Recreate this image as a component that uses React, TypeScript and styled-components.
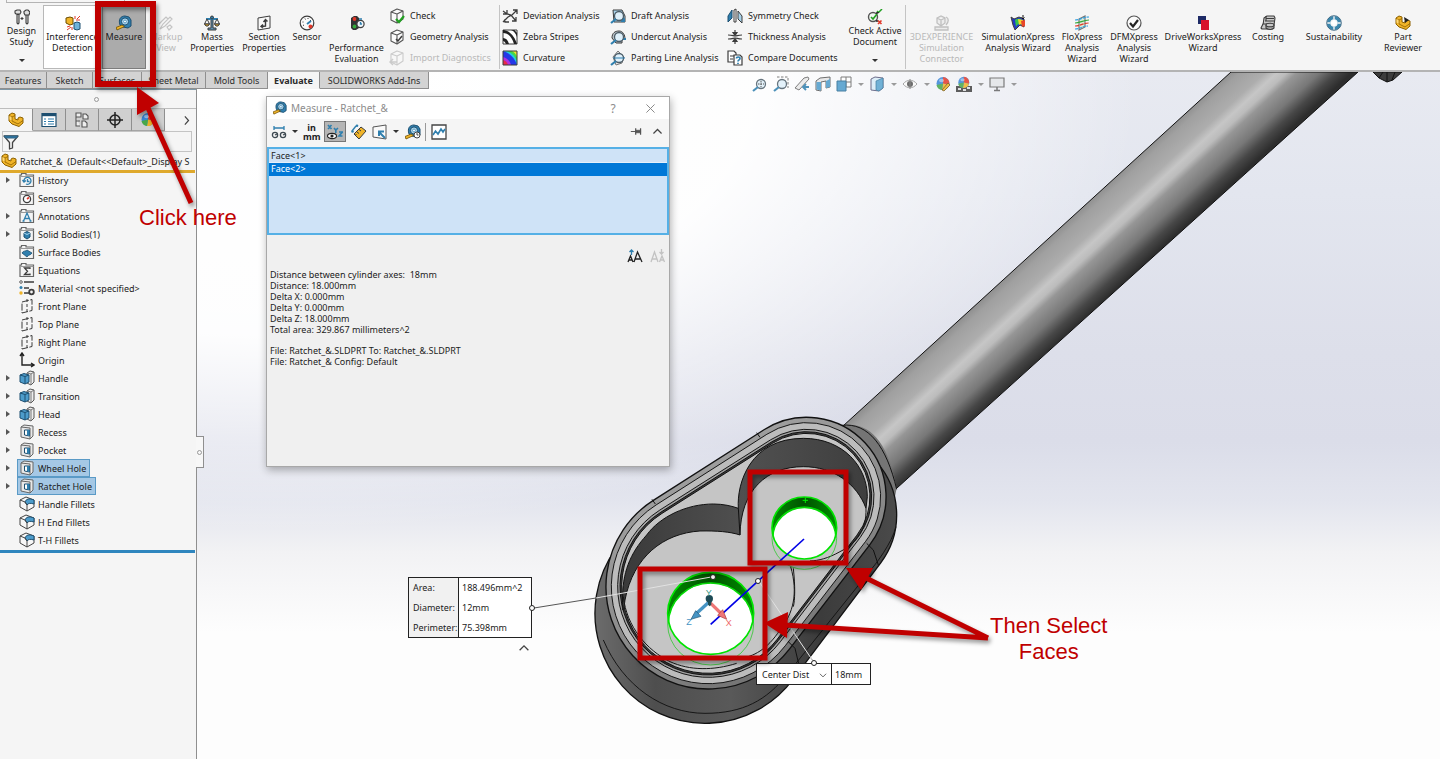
import React from "react";
import styled, { createGlobalStyle, css } from "styled-components";

const UI_FONT = '"Noto Sans", "Open Sans", sans-serif';
const RED = "#c00000";

const GlobalStyle = createGlobalStyle`
  *, *::before, *::after { box-sizing: border-box; }
  body { margin: 0; background: #fff; }
  button, input, select { font: inherit; color: inherit; margin: 0; padding: 0; border: 0; background: none; }
  ul { list-style: none; margin: 0; padding: 0; }
  svg { display: block; flex: none; }
`;

/* ---------- icons, all drawn on a 16 x 16 grid ---------- */

const K = "#3c3c3c";
const B = "#2f7fae";
const L = "#a9d3ea";
const Y = "#f0b429";

const folder = (
  <g>
    <path d="M1 14.500V3h1.500V1.500h4.500V3h7.500v11.500z" fill="#f4f4f4" stroke="#666" strokeWidth="1.200" />
    <path d="M1.500 4.500h13" stroke="#999" />
  </g>
);
const cube = (c: string) => (
  <g fill="#fafafa" stroke={c} strokeWidth="1.100" strokeLinejoin="round">
    <path d="M2 4l6-3 6 2v8l-6 4-6-3z" />
    <path d="M2 4l6 2 6-3M8 6v9" fill="none" />
  </g>
);
const tape = (
  <g>
    <path d="M4 10C2 4 5 1 9 1l4 1 2 3v6l-3 2-5-1z" fill={B} stroke="#1d4f70" />
    <circle cx="9" cy="6.500" r="3.600" fill={L} stroke="#1d4f70" />
    <circle cx="9" cy="6.500" r="1.400" fill="#fff" stroke={B} strokeWidth=".7" />
    <path d="M0 12.500l6-2.500 2.500 1.500L1 15z" fill={Y} stroke="#6b4c00" strokeWidth=".8" />
  </g>
);
const magnifier = (
  <g>
    <circle cx="9" cy="8" r="4.500" fill="#dff0fa" stroke="#4d5d68" strokeWidth="1.300" />
    <path d="M6 11l-5 4" stroke={B} strokeWidth="2.200" />
  </g>
);
const ball = (
  <g>
    <circle cx="8" cy="7.500" r="6.500" fill="#3a86d8" />
    <path d="M8 7.500V1a6.500 6.500 0 0 1 6.200 8z" fill="#e33b2e" />
    <path d="M8 7.500l6.200 1.500a6.500 6.500 0 0 1-7.200 5z" fill={Y} />
    <path d="M8 7.500l-1 6.500a6.500 6.500 0 0 1-5.500-5z" fill="#48a84a" />
    <ellipse cx="6.500" cy="4.500" rx="2.500" ry="1.800" fill="#fff" opacity=".45" />
  </g>
);
const part = (
  <g strokeLinejoin="round">
    <path d="M1 5V3l3-2 3 1v5l3 1V6l2-1 3 1v5l-4 3.500L4 12 1 9z" fill={Y} stroke="#8d6100" />
    <path d="M1 3.500l3 1.500 3-1.500M4 5v4l6 3 5-3.500" fill="none" stroke="#8d6100" strokeWidth=".8" />
    <path d="M1.500 4l2 1v3.500l-2-1z" fill="#ffd978" />
  </g>
);

const ICONS: Record<string, React.ReactNode> = {
  study: (
    <g fill="#ddd" stroke={K} strokeWidth="1.100">
      <path d="M1 2l2-1h3l1 2-1 2H2L1 4zM3 5.500h2V14l-1 1-1-1z" />
      <path d="M10 2.500L12 1h2l2 2-1 3h-4l-1-2zM12 6h2v8l-1 1-1-1z" />
      <path d="M6.500 9.500h3M8 8v3" />
    </g>
  ),
  interference: (
    <g>
      <path d="M1 3l4-1 3 1v6l-3 1-4-2z" fill={Y} stroke="#6b4c00" />
      <path d="M9 8l3-1 3 1v6l-3 1-3-1z" fill="#6fb3da" stroke="#1d4f70" />
      <path d="M10 1v3M15 1l-3 3M11 5h4M2 12l3-1M2 15l4-3M7 15v-3" stroke="#e0382a" />
    </g>
  ),
  tape,
  markup: (
    <g fill="#f6f6f6" stroke="#c4c4c4" strokeWidth="1.200">
      <path d="M1 9l4-4 3-3 2 2M2 14l5-3 7-7-2-2-7 7-3 5zM9 12l3-2 2 2-3 3z" />
    </g>
  ),
  scale: (
    <g fill={Y} stroke={K} strokeWidth="1">
      <path d="M7 2h2v11h3v2H4v-2h3z" fill="#5b8db0" />
      <path d="M2 4h12" stroke={B} strokeWidth="2" />
      <path d="M3 4L.5 9h5zM13 4l-2.500 5h5z" fill="#fff" />
      <path d="M.5 9h5L4 11H2zM10.500 9h5L14 11h-2z" />
      <circle cx="8" cy="2.500" r="1.500" fill={B} />
    </g>
  ),
  section: (
    <g fill="none" stroke={K}>
      <path d="M2 3l12-2v12L2 15z" fill="#f7f7f7" />
      <path d="M5 11.500l4.500-.5V5M7.500 7l2-2.500 2 2M7 9.500l-2 2 2 1.500" strokeWidth="1.400" />
    </g>
  ),
  gauge: (
    <g>
      <circle cx="8" cy="8" r="6.800" fill="#fafafa" stroke={K} strokeWidth="1.200" />
      <path d="M4 10l1 .5M3.500 7h1M6 3.500l.5 1M9 3v1M12 5l-1 1" stroke={K} />
      <path d="M8 9l4-3" stroke={B} strokeWidth="1.800" />
      <circle cx="11.500" cy="11.500" r="2" fill="#e0382a" />
    </g>
  ),
  performance: (
    <g>
      <path d="M2 3l3-2h3l2 2v10l-3 2H4l-2-2z" fill="#333" />
      <circle cx="5.500" cy="4" r="1.900" fill="#e0382a" />
      <circle cx="5.500" cy="11.500" r="1.900" fill="#35a83a" />
      <circle cx="11.500" cy="9" r="3.600" fill="#eef4f8" stroke={K} strokeWidth="1.200" />
      <path d="M11.500 7v2h1.500M10 4h3" stroke={B} fill="none" strokeWidth="1.300" />
    </g>
  ),
  check: (
    <g>
      {cube("#555")}
      <path d="M7 11l3 3 5-6" fill="none" stroke="#22a022" strokeWidth="2.200" />
    </g>
  ),
  geometry: (
    <g>
      {cube("#555")}
      <path d="M7 10l2 2 4-5" fill="none" stroke={K} strokeWidth="1.500" />
    </g>
  ),
  importing: (
    <g opacity=".45">
      {cube("#999")}
      <path d="M8 12H1m3-3l-3 3 3 3" fill="none" stroke="#999" strokeWidth="1.500" />
    </g>
  ),
  deviation: (
    <g fill="none" stroke={K} strokeWidth="1.300">
      <path d="M1 3l4 3 4 1 5 6M1 14l5-5 4-2 5-5M5 2v4H1M11 2h4v4M3 11v3h4M14 9v4h-4" />
    </g>
  ),
  zebra: (
    <g>
      <path d="M1 1h14v14H1z" fill="#fff" stroke={K} />
      <path d="M1 4c5 0 9 4 11 11h3C13 8 8 2 2 1H1zM1 9c3 0 5 2 6 6H4c-1-2-2-3-3-3zM9 1c3 1 5 4 6 7V4c-1-1-2-3-3-3z" fill="#222" />
    </g>
  ),
  curvature: (
    <g>
      <path d="M1 1h14v14H1z" fill="#2438e8" />
      <path d="M1 1h14v14C13 8 8 3 1 1z" fill="#20c8e8" />
      <path d="M5 1h10v10C13 6 10 3 5 1z" fill="#46d848" />
      <path d="M10 1h5v6c-1-3-3-5-5-6z" fill="#f2e230" />
      <path d="M1 7c4 1 7 4 8 8H1z" fill="#b030e0" />
      <path d="M1 10c3 1 4 2 5 5H1z" fill="#e82a4a" />
      <path d="M1 1h14v14H1z" fill="none" stroke={K} />
    </g>
  ),
  draft: (
    <g>
      <path d="M3 2h9l3 6v6H4z" fill={L} stroke={K} />
      <path d="M12 2v5l3 4v3h-4z" fill={B} />
      {magnifier}
    </g>
  ),
  undercut: (
    <g>
      <path d="M2 9c0-5 3-7 7-7s6 4 6 8h-3v4H6z" fill="#b9c3c9" stroke={K} />
      <path d="M12 9h4v2h-4z" fill={B} />
      {magnifier}
    </g>
  ),
  parting: (
    <g>
      <path d="M3 7l5-6 6 6-2 6-6 2z" fill="#e7e7e7" stroke="#777" />
      {magnifier}
      <path d="M3 8h12" stroke={B} />
    </g>
  ),
  symmetry: (
    <g strokeLinejoin="round">
      <path d="M1 14V8l4-6v8z" fill={B} stroke="#1d4f70" />
      <path d="M7 14V2l2-1v13z" fill="#fff" stroke={K} />
      <path d="M11 3l4 5v7l-4-4z" fill={L} stroke={K} />
    </g>
  ),
  thickness: (
    <g fill="none" stroke={K} strokeWidth="1.200">
      <path d="M1 6c5 0 5 1 7 1s3-1 7-1M1 10c5 0 5-1 7-1s3 1 7 1M8 1v5M8 15v-5" />
      <path d="M6 3.500h4L8 6.500zM6 12.500h4L8 9.500z" fill={K} />
    </g>
  ),
  compare: (
    <g fill="#fff" stroke={K} strokeWidth="1.200">
      <path d="M1 1h6l2 2v9H1z" />
      <path d="M3 6h4M3 9h3" />
      <path d="M7 5h6l2 2v8H7z" />
      <path d="M9.500 8.500c0-2 3.500-2 3.500 0 0 1.500-2 1.200-2 3M11 12.800v1.200" stroke={B} strokeWidth="1.700" fill="none" />
    </g>
  ),
  checkDoc: (
    <g fill="none">
      <circle cx="6" cy="8" r="4.500" stroke="#555" strokeWidth="1.400" fill="#f2f8f2" />
      <path d="M4 8l2 2 4-5" stroke="#22a022" strokeWidth="1.700" />
      <path d="M10 2l1.500 1.500L15 0" stroke="#22a022" strokeWidth="1.500" />
      <path d="M9 4h2M11 4v-1M9 12h2" stroke="#222" strokeWidth="1.500" />
      <path d="M11 11.500l3.500 3.500M14.500 11.500L11 15" stroke="#e0382a" strokeWidth="1.600" />
    </g>
  ),
  experience: (
    <g fill="#ececec" stroke="#c0c0c0" strokeWidth="1.300">
      <path d="M3 3l4-2 4 2v5l-4 3-4-3zM3 3l4 2 4-2M7 5v6M12 2c3 1 3 5 0 8" />
      <path d="M1 12h13v3H1z" />
    </g>
  ),
  simulation: (
    <g>
      <path d="M1 2l3 2 5-2 5 2v8l-4-2-5 5-2-5z" fill="#2438c8" stroke={K} />
      <path d="M5 5c3-2 5-1 7 0v5c-2-2-5-1-6 2z" fill="#33c24d" />
      <path d="M8 4l5 1v5c-2-1-3-1-4 0z" fill="#f2d330" />
      <path d="M11 6l4-1v6l-3 1z" fill="#e8472a" />
      <path d="M13 0v4M11.500 2.500L13 4l1.500-1.500" stroke="#111" fill="none" />
    </g>
  ),
  flow: (
    <g strokeWidth="1.200">
      <path d="M5 4l6-3v11l-6 3z" fill="#dcebd8" stroke="#777" />
      <path d="M1 5c5 0 8-3 14-3" stroke="#2f9fe0" fill="none" strokeDasharray="3 1" />
      <path d="M1 8c5 0 8-3 14-3" stroke="#35a83a" fill="none" />
      <path d="M1 11c5 0 8-3 14-3" stroke="#e0382a" fill="none" strokeDasharray="4 1" />
      <path d="M1 14c5 0 8-3 13-3" stroke="#2f9fe0" fill="none" strokeDasharray="3 1" />
    </g>
  ),
  dfm: (
    <g fill="none">
      <circle cx="8" cy="8" r="7" fill="#fafafa" stroke="#555" strokeWidth="1.200" />
      <path d="M4 8l3 3.500L12 5" stroke="#222" strokeWidth="2.200" />
    </g>
  ),
  driveworks: (
    <g>
      <path d="M3 1h8v8H3z" fill="#1d2a66" />
      <path d="M6 5h8v10H6z" fill="#d8102c" />
    </g>
  ),
  costing: (
    <g fill="#c9c9c9" stroke={K} strokeWidth="1.100" strokeLinejoin="round">
      <path d="M4 3l3-2h7l1 2-1 7H3z" />
      <path d="M6 3.500h8M5 6h9M6 1v5" />
      <path d="M1 13l2-4h4v5H2z" />
      <path d="M6 10v3c2 2 6 2 8 0v-3" fill="#a9a9a9" />
      <ellipse cx="10" cy="10" rx="4" ry="1.800" />
    </g>
  ),
  sustain: (
    <g>
      <circle cx="8" cy="8" r="5.400" fill="none" stroke="#3b87ad" strokeWidth="3.400" />
      <path d="M8 0v4M8 12v4M0 8h4M12 8h4" stroke="#f4f4f4" strokeWidth="1.400" />
      <circle cx="8" cy="8" r="7.300" fill="none" stroke="#1d4f70" strokeWidth=".8" />
      <path d="M8 4l1.500 2.500L12 8 9.500 9.500 8 12 6.500 9.500 4 8l2.500-1.500z" fill="#fff" />
    </g>
  ),
  review: (
    <g>
      {part}
      <path d="M9 2l5 3-4 3z" fill="#222" />
    </g>
  ),
  part,
  props: (
    <g fill="#fff" stroke="#1d4f70" strokeWidth="1.200">
      <path d="M1 1.500h14v13H1z" />
      <path d="M1 3h14" strokeWidth="2.400" />
      <path d="M3 7h2M3 9.500h2M3 12h2M7 7h6M7 9.500h6M7 12h6" stroke={B} />
    </g>
  ),
  config: (
    <g fill="#eee" stroke="#555" strokeWidth="1.100">
      <path d="M2 1h5v4H2zM2 5v9h4M2 9h4M9 2h3l2 2v3H9zM8 9h3l2 2v4H8z" />
    </g>
  ),
  target: (
    <g fill="none" stroke="#222" strokeWidth="1.500">
      <circle cx="8" cy="8" r="5" />
      <path d="M8 0v16M0 8h16" />
    </g>
  ),
  ball,
  funnel: (
    <g strokeLinejoin="round">
      <path d="M1 2h14L9.500 8.500v5.500l-3 1V8.500z" fill="#f4f4f4" stroke="#444" strokeWidth="1.300" />
      <path d="M1 2h14l-1.500 2h-11z" fill={B} stroke="#2b5f80" />
    </g>
  ),
  history: (
    <g fill="none">
      {folder}
      <path d="M5 9a3.500 3.500 0 1 1 2 3M3.500 8l1.500 2 2-1.500M8.500 7v2.500h2" stroke={B} strokeWidth="1.300" />
    </g>
  ),
  sensors: (
    <g fill="none">
      {folder}
      <circle cx="8" cy="9" r="3.600" fill="#fff" stroke={K} strokeWidth="1.300" />
      <path d="M8 9l2-1.500" stroke="#e0382a" strokeWidth="1.700" />
    </g>
  ),
  annotations: (
    <g fill="none">
      {folder}
      <path d="M4.500 13L8 5l3.500 8M6 10.500h4M3.500 13h2M10.500 13h2" stroke={B} strokeWidth="1.300" />
    </g>
  ),
  solids: (
    <g>
      {folder}
      <path d="M5 7l3-1.500L11 7v4l-3 2-3-2z" fill={B} stroke="#1d4f70" />
      <path d="M5 7l3 1.500L11 7" fill="none" stroke={L} />
    </g>
  ),
  surfaces: (
    <g>
      {folder}
      <path d="M3 9c2-3 3-1 5-3l5 3c-2 3-3 1-5 4z" fill={B} stroke="#1d4f70" strokeWidth=".8" />
    </g>
  ),
  equations: (
    <g fill="none">
      {folder}
      <path d="M11 7V6H5.500l3 3.300L5.500 12.500H11v-1" stroke={K} strokeWidth="1.300" />
    </g>
  ),
  material: (
    <g stroke={K} strokeWidth="1.300">
      <path d="M5 2h10M5 8h5M5 13h5" />
      <circle cx="2" cy="2" r="1.300" fill="#fff" strokeWidth=".8" />
      <circle cx="2" cy="7.500" r="1.500" fill={B} stroke="none" />
      <circle cx="2" cy="13" r="1.700" fill={Y} stroke="none" />
      <circle cx="12.500" cy="12" r="2.300" fill="none" strokeWidth="1.800" />
    </g>
  ),
  plane: (
    <g fill="none" stroke={K}>
      <path d="M3 4l10-2.500v11L3 15z" strokeDasharray="7 1.500" />
      <path d="M8 1v14" strokeDasharray="3 2" />
    </g>
  ),
  origin: (
    <g fill="none" stroke="#222" strokeWidth="1.400">
      <path d="M3 1v12h12M1 4l2-3 2 3M12 11l3 2-3 2" />
    </g>
  ),
  extrude: (
    <g strokeLinejoin="round">
      <path d="M8 3l3-2 4 1v10l-3 3-4-2z" fill="#eee" stroke="#555" />
      <path d="M12 4v11M12 4l3-2M8 3l4 1" fill="none" stroke="#777" />
      <path d="M1 5l4-1.500L10 5v7l-4 2-5-2z" fill="#4d9ccb" stroke="#1d4f70" />
      <path d="M1 5l5 1.500L10 5M6 6.500V14" stroke="#1d4f70" fill="none" />
    </g>
  ),
  cut: (
    <g strokeLinejoin="round">
      <path d="M2 3l3-2 9 1v10l-3 3-9-2z" fill="#e8e8e8" stroke="#666" />
      <path d="M11 15V4L2 3" fill="none" stroke="#666" />
      <path d="M5.500 6h5v6l-5-1z" fill="#fff" stroke="#1d4f70" />
      <path d="M8 6h2.500v6L8 11z" fill={B} />
    </g>
  ),
  fillet: (
    <g strokeLinejoin="round">
      <path d="M1 4l6-3 8 3v7l-7 4-7-4z" fill="#f7f7f7" stroke="#444" />
      <path d="M6 6c1-3 4-4 9-2v4c-3-1-6-1-7 1z" fill="#4d9ccb" stroke="#1d4f70" />
      <path d="M1 4l5 2 2 3v6" fill="none" stroke="#444" />
    </g>
  ),
  arcs: (
    <g fill="none" stroke="#3f4a52" strokeWidth="1.300">
      <circle cx="4" cy="11" r="2.600" />
      <circle cx="12" cy="11" r="2.600" />
      <path d="M4 11l2-1M12 11l2-1" />
      <path d="M3 4h10M3 2v4M13 2v4" stroke={B} />
    </g>
  ),
  xyz: (
    <g fill="none" stroke={B} strokeWidth="1.600">
      <path d="M1 1l3.500 4M4.500 1L1 5M7 4l1.800 2L11 4M8.800 6v3M12 8h3.500L12 12h3.500" />
      <ellipse cx="5" cy="12" rx="4.500" ry="2.600" fill="#fff" stroke="#222" strokeWidth="1.100" />
      <circle cx="5" cy="12" r="1.600" fill="#222" stroke="none" />
    </g>
  ),
  ruler: (
    <g>
      <path d="M1 7l4-5" stroke={B} strokeWidth="1.400" />
      <circle cx="1.500" cy="7.500" r="1.300" fill={B} />
      <circle cx="6" cy="1.800" r="1.300" fill={B} />
      <path d="M3 10l7-7 5 4-7 8z" fill={Y} stroke={K} />
      <path d="M6 8l2 1.500M8 5.500L10 7M4.500 10l1 1" stroke={K} />
    </g>
  ),
  project: (
    <g fill="none">
      <path d="M1 3l13-2v14L1 13z" fill="#fafafa" stroke="#555" />
      <path d="M13 14L7 8M7 12V7.500h5" stroke={B} strokeWidth="2" />
    </g>
  ),
  tapeClock: (
    <g>
      {tape}
      <circle cx="12" cy="11" r="3" fill="#fff" stroke="#444" />
      <path d="M12 9v2h1.500" fill="none" stroke="#444" />
    </g>
  ),
  chart: (
    <g fill="none">
      <path d="M1 1h14v14H1z" fill="#fff" stroke="#444" strokeWidth="1.300" />
      <path d="M2 11l2.500-4L7 10l3-5 2 3 2-3" stroke={B} strokeWidth="1.600" />
    </g>
  ),
  pin: (
    <g fill="#555" stroke="#555">
      <path d="M1 8h6" strokeWidth="1.200" />
      <path d="M7 4v8M13 4v8" strokeWidth="1.500" />
      <path d="M7 6.500h6v3H7z" />
    </g>
  ),
  up: <path d="M3 10.500L8 5.500l5 5" fill="none" stroke="#444" strokeWidth="1.500" />,
  right: <path d="M6 3l4.500 5L6 13" fill="none" stroke="#444" strokeWidth="1.500" />,
  down: <path d="M3 6l5 5 5-5" fill="none" stroke="#444" strokeWidth="1.300" />,
  close: <path d="M3 3l10 10M13 3L3 13" stroke="#888" strokeWidth="1.200" />,
  fontUp: (
    <g fill="none" stroke="#222" strokeWidth="1.300">
      <path d="M1 14l2.500-6L6 14M2 12h3M7 14l3.500-10L15 14M8.500 11h5" />
      <path d="M4.500 7V2M2.500 4l2-2 2 2" stroke={B} />
    </g>
  ),
  fontDown: (
    <g fill="none" stroke="#c2c2c2" strokeWidth="1.300">
      <path d="M1 14L4.500 4 8 14M2.500 11h4M9.500 14L12 8l2.500 6M10.500 12h3M11.500 1v5M9.500 4l2 2 2-2" />
    </g>
  ),
  zoomFit: (
    <g>
      {magnifier}
      <path d="M9 5v6M6 8h6" stroke={K} strokeDasharray="1.500 1" />
    </g>
  ),
  zoomArea: (
    <g>
      <path d="M4 1h11v11" fill="none" stroke="#666" strokeDasharray="2.500 1.500" />
      {magnifier}
    </g>
  ),
  previous: (
    <g>
      <path d="M1 12l9-10 4-1 1 2-10 11z" fill="#e9e9e9" stroke="#666" />
      <path d="M15 11H9m3-3l-3 3 3 3" fill="none" stroke={B} strokeWidth="1.900" />
    </g>
  ),
  sectionView: (
    <g strokeLinejoin="round">
      <path d="M1 5l4-3 10-1v10l-4 1V5L6 6v9l-5-1z" fill="#e6e6e6" stroke="#555" />
      <path d="M1.500 6L6 6v8.500l-4.500-1zM11 5l4-2v8l-4 1z" fill="#4d9ccb" />
    </g>
  ),
  orient: (
    <g>
      <path d="M5 1h10v10H5zM5 6h10M10 1v10" fill="#fff" stroke="#666" />
      <path d="M1 5h9v10H1z" fill="#4d9ccb" stroke="#2a6b92" />
    </g>
  ),
  display: (
    <g strokeLinejoin="round">
      <path d="M2 3l4-2 8 1v10l-4 3-8-1z" fill="#d9edf8" stroke="#557" />
      <path d="M7 5l7-3v10l-4 3-3-1z" fill="#5aa5d0" stroke="#2a6b92" strokeWidth=".7" />
    </g>
  ),
  eye: (
    <g>
      <path d="M1 8c4-5 10-5 14 0-4 5-10 5-14 0z" fill="#fafafa" stroke="#999" />
      <circle cx="8" cy="8" r="3" fill="#555" />
      <path d="M8 3v10" stroke="#777" />
    </g>
  ),
  appearance: (
    <g>
      {ball}
      <path d="M7 14l6-7 2 2-6 6z" fill={Y} stroke="#6b4c00" strokeWidth=".8" />
    </g>
  ),
  scene: (
    <g>
      <path d="M0 10h16v6H0z" fill="#444" />
      <path d="M2 12h3v2H2zM7 13h3v2H7zM11 11h3v2h-3z" fill="#ddd" />
      <g transform="translate(1 0) scale(.85)">{ball}</g>
    </g>
  ),
  monitor: (
    <g stroke="#666">
      <path d="M1 2h14v9H1z" fill="#e4e6e8" strokeWidth="1.200" />
      <path d="M8 11v3M5 14.500h6" strokeWidth="1.500" />
    </g>
  ),
};

const Icon = ({ name, size = 16 }: { name: string; size?: number }) => (
  <svg width={size} height={size} viewBox="0 0 16 16" aria-hidden="true">
    {ICONS[name]}
  </svg>
);

/* ---------- page frame ---------- */

const Page = styled.div`
  position: relative;
  display: flex;
  flex-direction: column;
  min-height: 100vh;
  overflow: hidden;
  font: 9px/11px ${UI_FONT};
  color: #1c1c1c;
`;

const Ribbon = styled.header`
  position: relative;
  display: flex;
  height: 72px;
  padding-top: 5px;
  background: #f5f5f5;
  border-bottom: 2px solid #b4b4b4;

  &::before {
    content: "";
    position: absolute;
    top: 0;
    left: 6px;
    width: 119px;
    height: 3px;
    border: 1px solid #b4b4b4;
    border-top: 0;
  }
`;

const Tool = styled.button<{ $w: number; $state?: "hover" | "pressed" | "off"; $top?: boolean; $third?: boolean }>`
  position: relative;
  display: flex;
  flex: none;
  flex-direction: column;
  align-items: center;
  width: ${(p) => p.$w}px;
  height: 64px;
  padding-top: ${(p) => (p.$top ? 3 : 9)}px;
  border: 1px solid transparent;
  white-space: pre;
  text-align: center;

  & > span { margin-top: ${(p) => (p.$third ? 11 : 0)}px; }

  ${(p) => p.$state === "hover" && css`background: #fff; border-color: #b8b8b8;`}
  ${(p) => p.$state === "pressed" && css`background: #ababab; border-color: #7c7c7c;`}
  ${(p) => p.$state === "off" && css`color: #b9b9b9;`}
`;

const Caret = styled.i<{ $gray?: boolean }>`
  border: 3px solid transparent;
  border-top-color: ${(p) => (p.$gray ? "#8b8b8b" : "#333")};
  border-bottom-width: 0;
`;

const ToolCaret = styled(Caret)`
  margin-top: auto;
  margin-bottom: 6px;
`;

const Rule = styled.div`
  flex: none;
  width: 1px;
  height: 64px;
  margin-right: 2px;
  background: #c4c4c4;
`;

const ToolColumn = styled.div<{ $w: number }>`
  display: flex;
  flex: none;
  flex-direction: column;
  width: ${(p) => p.$w}px;
`;

const SmallTool = styled.button<{ $off?: boolean }>`
  display: flex;
  align-items: center;
  gap: 5px;
  height: 21px;
  white-space: nowrap;
  color: ${(p) => (p.$off ? "#b9b9b9" : "inherit")};
`;

const Workspace = styled.div`
  position: relative;
  display: flex;
  flex: 1;
  flex-direction: column;
  background:
    radial-gradient(ellipse 860px 440px at 280px 20px, #fff 0%, rgba(255, 255, 255, 0.95) 55%, rgba(255, 255, 255, 0) 100%),
    linear-gradient(180deg, #e8eaf1 0, #e3e6ef 120px, #dddfea 280px, #dbdde9 370px, #e3e5ee 430px, #f2f2f4 480px, #fdfdfd 560px);
`;

const SceneSvg = styled.svg`
  position: absolute;
  inset: 0;
  width: 1440px;
  height: 688px;
`;

const TabStrip = styled.nav`
  position: relative;
  display: flex;
  height: 17px;
`;

const Tab = styled.button<{ $w: number; $active?: boolean }>`
  flex: none;
  width: ${(p) => p.$w}px;
  background: ${(p) => (p.$active ? "#f5f5f5" : "#d3d3d3")};
  border: 1px solid #8f8f8f;
  border-width: 0 1px 1px 0;
  border-bottom-color: ${(p) => (p.$active ? "#f5f5f5" : "#8f8f8f")};
  font-weight: ${(p) => (p.$active ? 700 : 400)};
  color: #2b2b2b;
  white-space: nowrap;
`;

const Body = styled.div`
  position: relative;
  display: flex;
  flex: 1;
`;

/* ---------- feature manager ---------- */

const Sidebar = styled.aside`
  position: relative;
  flex: none;
  width: 197px;
  background: #f5f5f5;
  border-right: 1px solid #8f8f8f;
`;

const Grip = styled.div`
  display: flex;
  align-items: center;
  justify-content: center;
  height: 20px;
  padding-right: 4px;
  border-top: 1px solid #7f98a6;
  border-bottom: 1px solid #bdbdbd;
`;

const Dot = styled.i`
  width: 5px;
  height: 5px;
  border: 1px solid #999;
  border-radius: 50%;
`;

const PanelTabs = styled.div`
  display: flex;
  height: 22px;
`;

const PanelTab = styled.button<{ $active?: boolean }>`
  display: flex;
  align-items: center;
  justify-content: center;
  width: 33px;
  background: ${(p) => (p.$active ? "#f5f5f5" : "#d0d0d0")};
  border-right: 1px solid #8f8f8f;
  border-bottom: 1px solid ${(p) => (p.$active ? "#f5f5f5" : "#a5a5a5")};
`;

const PanelMore = styled.button`
  margin-left: auto;
  padding-right: 3px;
`;

const Filter = styled.label`
  display: flex;
  align-items: center;
  height: 21px;
  margin: 0 4px 0 2px;
  border: 1px solid #c4c4c4;

  & > input { flex: 1; min-width: 0; height: 100%; outline: 0; }
`;

const RootRow = styled.div`
  display: flex;
  align-items: center;
  gap: 3px;
  height: 21px;
  margin-right: 1px;
  padding-left: 1px;
  white-space: pre;
  border-bottom: 3px solid #dfa92c;
`;

const Tree = styled.ul`
  margin-top: -2px;
  padding-bottom: 1px;
`;

const TreeRow = styled.li`
  display: flex;
  align-items: center;
  height: 18px;
  padding-left: 6px;
`;

const Twist = styled.i<{ $open: boolean }>`
  width: 11px;
  height: 6px;
  border: 3px solid transparent;
  border-left: 4px solid ${(p) => (p.$open ? "#555" : "transparent")};
`;

const TreeLabel = styled.button<{ $on?: boolean }>`
  display: flex;
  align-items: center;
  gap: 3px;
  height: 18px;
  padding: 0 3px 0 1px;
  border: 1px solid ${(p) => (p.$on ? "#5a9ac6" : "transparent")};
  background: ${(p) => (p.$on ? "#a5c8e5" : "none")};
  white-space: nowrap;
`;

const RollbackBar = styled.div`
  height: 3px;
  margin-right: 1px;
  background: #2f86be;
`;

const EdgeHandle = styled.button`
  position: absolute;
  top: 347px;
  left: 196px;
  display: flex;
  align-items: center;
  justify-content: center;
  width: 8px;
  height: 32px;
  background: #f7f7f7;
  border: 1px solid #8f8f8f;
  border-left: 0;
`;

/* ---------- view toolbar ---------- */

const ViewBar = styled.div`
  position: absolute;
  top: 4px;
  left: 752px;
  display: flex;
  align-items: center;
  gap: 4px;
  height: 16px;
  opacity: 0.85;
`;

const ViewButton = styled.button`
  width: 17px;
  height: 16px;
`;

const CaretButton = styled.button`
  display: flex;
  justify-content: center;
  width: 8px;
`;

/* ---------- measure window ---------- */

const Dialog = styled.section`
  position: absolute;
  top: 24px;
  left: 266px;
  display: flex;
  flex-direction: column;
  width: 404px;
  height: 371px;
  background: #f0f0f0;
  border: 1px solid #a8a8a8;
  box-shadow: 1px 3px 8px rgba(0, 0, 0, 0.3);
`;

const TitleBar = styled.header`
  display: flex;
  align-items: center;
  height: 22px;
  padding: 0 11px 0 6px;
  background: #fff;
  color: #8c8c8c;

  & > h1 { flex: 1; margin: 0 0 0 4px; font: 10px/14px ${UI_FONT}; }
`;

const TitleButton = styled.button`
  display: flex;
  align-items: center;
  justify-content: center;
  width: 16px;
  margin-left: 21px;
  font-size: 12px;
`;

const DialogTools = styled.div`
  display: flex;
  align-items: center;
  gap: 4px;
  height: 28px;
  padding: 0 3px 3px;
  background: #f5f5f5;
`;

const DialogTool = styled.button<{ $on?: boolean }>`
  display: flex;
  align-items: center;
  justify-content: center;
  width: ${(p) => (p.$on ? 22 : 17)}px;
  height: 21px;
  border: ${(p) => (p.$on ? "1px solid #777" : "0")};
  background: ${(p) => (p.$on ? "#b5b5b5" : "none")};
`;

const Units = styled.button`
  width: 17px;
  font: 700 9px/9px ${UI_FONT};
  white-space: pre;
`;

const ToolRule = styled.i`
  width: 1px;
  height: 18px;
  background: #999;
`;

const Spacer = styled.i`
  flex: 1;
`;

const Selection = styled.ul`
  height: 88px;
  padding-top: 1px;
  background: #cfe3f7;
  border: 2px solid #55b0e6;
`;

const SelectionRow = styled.li<{ $on?: boolean }>`
  height: 13px;
  padding-left: 2px;
  line-height: 12px;
  color: ${(p) => (p.$on ? "#fff" : "inherit")};
  background: ${(p) => (p.$on ? "#0078d7" : "none")};
  border-bottom: 1px solid ${(p) => (p.$on ? "#0078d7" : "#e6f0fa")};
`;

const FontButtons = styled.div`
  display: flex;
  justify-content: flex-end;
  gap: 7px;
  padding: 13px 3px 5px;
`;

const Report = styled.p`
  margin: 0 3px 10px;
  white-space: pre;
`;

/* ---------- callouts on the model ---------- */

const AreaCallout = styled.table`
  position: absolute;
  top: 505px;
  left: 408px;
  width: 124px;
  border: 1px solid #222;
  border-collapse: collapse;
  background: #fff;

  th, td { height: 20px; padding: 0 0 0 4px; font-weight: 400; text-align: left; white-space: nowrap; }
  th { width: 50px; background: #f1f1f1; border-right: 1px solid #222; }
  td { padding-left: 3px; }
`;

const CalloutToggle = styled.button`
  position: absolute;
  top: 569px;
  left: 517px;
`;

const DistanceCallout = styled.div`
  position: absolute;
  top: 591px;
  left: 756px;
  display: flex;
  height: 22px;
  background: #fff;
  border: 1px solid #222;

  & > input { width: 38px; padding-left: 3px; }
`;

const SelectBox = styled.label`
  position: relative;
  display: flex;
  border-right: 1px solid #222;

  & > select { width: 74px; padding-left: 5px; appearance: none; }
  & > svg { position: absolute; top: 6px; right: 3px; }
`;

/* ---------- red mark-up layer ---------- */

const Marks = styled.svg`
  position: absolute;
  top: 0;
  left: 0;
  width: 1440px;
  height: 759px;
  pointer-events: none;
  filter: drop-shadow(2px 3px 2px rgba(0, 0, 0, 0.4));
`;

const Note = styled.p<{ $x: number; $y: number }>`
  position: absolute;
  top: ${(p) => p.$y}px;
  left: ${(p) => p.$x}px;
  margin: 0;
  font: 22px/26px "Liberation Sans", Arial, sans-serif;
  color: ${RED};
  text-align: center;
  white-space: pre;
`;

/* ---------- data ---------- */

type ToolDef = { icon: string; label: string; w: number; state?: "hover" | "pressed" | "off"; third?: boolean };

const LEFT_TOOLS: ToolDef[] = [
  { icon: "interference", label: "Interference\nDetection", w: 59, state: "hover" },
  { icon: "tape", label: "Measure", w: 44, state: "pressed" },
  { icon: "markup", label: "Markup\nView", w: 40, state: "off" },
  { icon: "scale", label: "Mass\nProperties", w: 52 },
  { icon: "section", label: "Section\nProperties", w: 52 },
  { icon: "gauge", label: "Sensor", w: 34 },
  { icon: "performance", label: "Performance\nEvaluation", w: 65, third: true },
];

const COLUMNS: { w: number; items: [string, string][] }[] = [
  { w: 108, items: [["deviation", "Deviation Analysis"], ["zebra", "Zebra Stripes"], ["curvature", "Curvature"]] },
  { w: 117, items: [["draft", "Draft Analysis"], ["undercut", "Undercut Analysis"], ["parting", "Parting Line Analysis"]] },
  { w: 118, items: [["symmetry", "Symmetry Check"], ["thickness", "Thickness Analysis"], ["compare", "Compare Documents"]] },
];

const RIGHT_TOOLS: ToolDef[] = [
  { icon: "experience", label: "3DEXPERIENCE\nSimulation\nConnector", w: 67, state: "off" },
  { icon: "simulation", label: "SimulationXpress\nAnalysis Wizard", w: 86 },
  { icon: "flow", label: "FloXpress\nAnalysis\nWizard", w: 42 },
  { icon: "dfm", label: "DFMXpress\nAnalysis\nWizard", w: 62 },
  { icon: "driveworks", label: "DriveWorksXpress\nWizard", w: 76 },
  { icon: "costing", label: "Costing", w: 54 },
  { icon: "sustain", label: "Sustainability", w: 78 },
  { icon: "review", label: "Part\nReviewer", w: 60 },
];

const TABS: [string, number][] = [
  ["Features", 47],
  ["Sketch", 46],
  ["Surfaces", 49],
  ["Sheet Metal", 64],
  ["Mold Tools", 62],
  ["Evaluate", 52],
  ["SOLIDWORKS Add-Ins", 109],
];

const TREE: { icon: string; label: string; open?: boolean; on?: boolean }[] = [
  { icon: "history", label: "History", open: true },
  { icon: "sensors", label: "Sensors" },
  { icon: "annotations", label: "Annotations", open: true },
  { icon: "solids", label: "Solid Bodies(1)", open: true },
  { icon: "surfaces", label: "Surface Bodies" },
  { icon: "equations", label: "Equations" },
  { icon: "material", label: "Material <not specified>" },
  { icon: "plane", label: "Front Plane" },
  { icon: "plane", label: "Top Plane" },
  { icon: "plane", label: "Right Plane" },
  { icon: "origin", label: "Origin" },
  { icon: "extrude", label: "Handle", open: true },
  { icon: "extrude", label: "Transition", open: true },
  { icon: "extrude", label: "Head", open: true },
  { icon: "cut", label: "Recess", open: true },
  { icon: "cut", label: "Pocket", open: true },
  { icon: "cut", label: "Wheel Hole", open: true, on: true },
  { icon: "cut", label: "Ratchet Hole", open: true, on: true },
  { icon: "fillet", label: "Handle Fillets" },
  { icon: "fillet", label: "H End Fillets" },
  { icon: "fillet", label: "T-H Fillets" },
];

const VIEW_TOOLS = [
  "zoomFit", "zoomArea", "previous", "sectionView", "orient", "|", "display", "|", "eye", "|", "appearance", "scene", "|", "monitor", "|",
];

/* ---------- model drawing ---------- */

/** Outline of two circles joined by their outer tangents. */
function capsule(x1: number, y1: number, r1: number, x2: number, y2: number, r2: number) {
  const d = Math.hypot(x2 - x1, y2 - y1);
  const ux = (x2 - x1) / d;
  const uy = (y2 - y1) / d;
  const k = (r1 - r2) / d;
  const s = Math.sqrt(1 - k * k);
  const a = [ux * k + uy * s, uy * k - ux * s];
  const b = [ux * k - uy * s, uy * k + ux * s];
  const pt = (x: number, y: number, r: number, n: number[]) => `${(x + r * n[0]).toFixed(1)} ${(y + r * n[1]).toFixed(1)}`;
  return `M${pt(x1, y1, r1, a)}L${pt(x2, y2, r2, a)}A${r2} ${r2} 0 0 1 ${pt(x2, y2, r2, b)}L${pt(x1, y1, r1, b)}A${r1} ${r1} 0 1 1 ${pt(x1, y1, r1, a)}Z`;
}

const rim = (big: number, small: number) => capsule(385, 560, big, 680, 290, small);

const Hole = ({ id, cx, top, bottom, rx, ry }: { id: string; cx: number; top: number; bottom: number; rx: number; ry: number }) => (
  <g>
    <clipPath id={id}>
      <ellipse cx={cx} cy={top} rx={rx} ry={ry} />
    </clipPath>
    <ellipse cx={cx} cy={top} rx={rx} ry={ry} fill="url(#green)" />
    <g clipPath={`url(#${id})`}>
      <ellipse cx={cx} cy={bottom} rx={rx - 2} ry={ry} fill="#fff" stroke="#00e400" strokeWidth="5" />
    </g>
    <ellipse cx={cx} cy={bottom} rx={rx} ry={ry} fill="none" stroke="#10c810" strokeWidth="2" />
    <ellipse cx={cx} cy={top} rx={rx} ry={ry} fill="none" stroke="#00e400" strokeWidth="5" />
  </g>
);

const Model = () => (
  <SceneSvg viewBox="0 72 1440 688" role="img" aria-label="Ratchet handle model">
    <defs>
      <linearGradient id="tube" gradientUnits="userSpaceOnUse" x1="843" y1="426" x2="900" y2="488">
        <stop offset="0" stopColor="#8e8e8e" />
        <stop offset=".1" stopColor="#a0a0a0" />
        <stop offset=".3" stopColor="#adadad" />
        <stop offset=".4" stopColor="#c6c6c6" />
        <stop offset=".48" stopColor="#bcbcbc" />
        <stop offset=".56" stopColor="#969696" />
        <stop offset=".74" stopColor="#787878" />
        <stop offset=".88" stopColor="#474747" />
        <stop offset="1" stopColor="#2d2d2d" />
      </linearGradient>
      <linearGradient id="side" x1="0" y1="0" x2="1" y2="0">
        <stop offset="0" stopColor="#6c6c6c" />
        <stop offset=".2" stopColor="#4e4e4e" />
        <stop offset=".45" stopColor="#595959" />
        <stop offset=".75" stopColor="#3c3c3c" />
        <stop offset="1" stopColor="#4a4a4a" />
      </linearGradient>
      <linearGradient id="fillet" x1=".2" y1="0" x2=".8" y2="1">
        <stop offset="0" stopColor="#a8a8a8" />
        <stop offset=".5" stopColor="#8e8e8e" />
        <stop offset="1" stopColor="#6a6a6a" />
      </linearGradient>
      <linearGradient id="green" x1="0" y1="0" x2="1" y2="0">
        <stop offset="0" stopColor="#008a00" />
        <stop offset=".5" stopColor="#005200" />
        <stop offset="1" stopColor="#009000" />
      </linearGradient>
      <linearGradient id="wall" x1="0" y1="0" x2="1" y2="0">
        <stop offset="0" stopColor="#3a3a3a" />
        <stop offset=".5" stopColor="#505050" />
        <stop offset="1" stopColor="#3e3e3e" />
      </linearGradient>
    </defs>

    <path d="M843 426L1231 72H1358L897 488L870 470Z" fill="url(#tube)" stroke="#111" />
    <path d="M1373 72l6 6 8 4 6-2 9-8zM1379 78l4-6M1387 82v-10M1392 80l3-8" fill="#3c3c3c" stroke="#111" />

    <g transform="translate(580 400) scale(.33333)" strokeLinejoin="round">
      <path d="M785 78C870 60 925 130 950 265L945 290L938 330L800 150Z" fill="#757575" />
      <path d="M785 76C865 66 920 140 950 268" fill="none" stroke="#111" strokeWidth="3" />
      <path d={capsule(375, 640, 330, 710, 345, 240)} fill="url(#side)" stroke="#111" strokeWidth="4" />
      <path d="M70 720C130 860 250 940 375 940C490 940 560 900 620 825L860 525C890 490 935 430 948 380" fill="none" stroke="#161616" strokeWidth="3" />
      <path d={rim(307, 238)} fill="url(#fillet)" stroke="#111" strokeWidth="4" />
      <path d={rim(291, 222)} fill="#bcbcbc" stroke="#161616" strokeWidth="3" />
      <path d={rim(272, 202)} fill="#a2a2a2" stroke="#161616" strokeWidth="3" />
      <path d={rim(265, 195)} fill="#3d3d3d" stroke="#111" strokeWidth="3" />
      <path d={rim(260, 190)} fill="#c5c5c5" stroke="#111" strokeWidth="3" />
      <path d="M128 600C126 520 150 460 200 405C240 350 320 312 400 312C430 312 455 318 475 325C470 250 510 115 670 115C790 115 862 200 862 290L858 325C830 250 760 200 670 200C560 200 482 270 480 405C450 395 410 392 360 393C250 400 160 470 135 600C130 640 125 640 128 600Z" fill="url(#wall)" stroke="#111" strokeWidth="3" />
      <path d="M475 325L480 405" stroke="#111" strokeWidth="3" />
      <path d="M858 325C860 390 830 430 780 455C745 475 715 482 690 483M632 500C655 580 640 640 600 690C560 750 520 770 480 775M640 505C646 560 645 600 640 620" fill="none" stroke="#161616" strokeWidth="3" />
      <path d="M130 590C140 680 200 750 270 785C330 812 400 812 470 790" fill="none" stroke="#161616" strokeWidth="3" />
      <path d="M216 298l10 14M530 98l10 14M860 430l20 20 15 45M625 725l20 20 12 50" fill="none" stroke="#111" strokeWidth="3" />

      <Hole id="wheel" cx={392} top={640} bottom={672} rx={129} ry={123} />
      <Hole id="ratchet" cx={673} top={384} bottom={415} rx={97} ry={93} />
      <path d="M668 301h16M676 293v16" stroke="#00f000" strokeWidth="3" />
      <path d="M392 673L672 417" stroke="#0000e6" strokeWidth="5" />

      <path d="M388 605L350 640" stroke="#4694c4" strokeWidth="10" />
      <path d="M333 658l14-26 16 17z" fill="#4694c4" stroke="#1d4f70" strokeWidth="2" />
      <path d="M390 608L425 642" stroke="#e77" strokeWidth="10" />
      <path d="M440 658l-27-12 15-17z" fill="#e77" stroke="#a33" strokeWidth="2" />
      <path d="M384 600h10v14l-5 5-5-5z" fill="#1f4f55" />
      <circle cx="388" cy="596" r="11" fill="#1d4a55" />
      <g fontFamily="Liberation Sans, Arial, sans-serif" fontSize="27" textAnchor="middle">
        <text x="386" y="588" fill="#3a9a8a">Y</text>
        <text x="327" y="676" fill="#4694c4">Z</text>
        <text x="446" y="678" fill="#e66">X</text>
      </g>
    </g>
  </SceneSvg>
);

const Leaders = () => (
  <SceneSvg viewBox="0 72 1440 688" aria-hidden="true">
    <path d="M534 608L596 598M794 633L813 661" stroke="#555" />
    <path d="M596 598L711 577M760 583L813 661" stroke="#e2e2e2" />
    <g fill="#fff" stroke="#222">
      <circle cx="532" cy="608" r="2.500" />
      <circle cx="713" cy="577" r="2.500" />
      <circle cx="758" cy="581" r="2.500" />
      <circle cx="814" cy="663" r="2.500" />
    </g>
  </SceneSvg>
);

const ToolButton = ({ t }: { t: ToolDef }) => (
  <Tool $w={t.w} $state={t.state} $third={t.third}>
    <Icon name={t.icon} />
    <span>{t.label}</span>
  </Tool>
);

export default function App() {
  return (
    <Page>
      <GlobalStyle />

      <Ribbon>
        <Tool $w={43} $top>
          <Icon name="study" />
          <span>{"Design\nStudy"}</span>
          <ToolCaret />
        </Tool>
        {LEFT_TOOLS.map((t) => (
          <ToolButton key={t.label} t={t} />
        ))}
        <ToolColumn $w={110}>
          <SmallTool><Icon name="check" />Check</SmallTool>
          <SmallTool><Icon name="geometry" />Geometry Analysis</SmallTool>
          <SmallTool $off><Icon name="importing" />Import Diagnostics</SmallTool>
        </ToolColumn>
        <Rule />
        {COLUMNS.map((c, i) => (
          <ToolColumn key={i} $w={c.w}>
            {c.items.map(([icon, label]) => (
              <SmallTool key={label}><Icon name={icon} />{label}</SmallTool>
            ))}
          </ToolColumn>
        ))}
        <Tool $w={60} $top>
          <Icon name="checkDoc" />
          <span>{"Check Active\nDocument"}</span>
          <ToolCaret />
        </Tool>
        <Rule />
        {RIGHT_TOOLS.map((t) => (
          <ToolButton key={t.label} t={t} />
        ))}
      </Ribbon>

      <Workspace>
        <Model />
        <TabStrip>
          {TABS.map(([label, w]) => (
            <Tab key={label} $w={w} $active={label === "Evaluate"}>{label}</Tab>
          ))}
        </TabStrip>

        <Body>
          <Sidebar>
            <Grip><Dot /></Grip>
            <PanelTabs>
              {["part", "props", "config", "target", "ball"].map((n, i) => (
                <PanelTab key={n} $active={i === 0} aria-label={n}><Icon name={n} /></PanelTab>
              ))}
              <PanelMore aria-label="More tabs"><Icon name="right" size={13} /></PanelMore>
            </PanelTabs>
            <Filter>
              <Icon name="funnel" />
              <input aria-label="Filter tree" />
            </Filter>
            <RootRow>
              <Icon name="part" />
              {"Ratchet_&  (Default<<Default>_Display S"}
            </RootRow>
            <Tree>
              {TREE.map((n) => (
                <TreeRow key={n.label}>
                  <Twist $open={!!n.open} />
                  <TreeLabel $on={n.on}>
                    <Icon name={n.icon} />
                    {n.label}
                  </TreeLabel>
                </TreeRow>
              ))}
            </Tree>
            <RollbackBar />
            <EdgeHandle aria-label="Collapse panel"><Dot /></EdgeHandle>
          </Sidebar>
        </Body>

        <ViewBar>
          {VIEW_TOOLS.map((n, i) =>
            n === "|" ? (
              <CaretButton key={i} aria-label="Options"><Caret $gray /></CaretButton>
            ) : (
              <ViewButton key={i} aria-label={n}><Icon name={n} /></ViewButton>
            ),
          )}
        </ViewBar>

        <Dialog aria-label="Measure">
          <TitleBar>
            <Icon name="tape" size={14} />
            <h1>Measure - Ratchet_&amp;</h1>
            <TitleButton aria-label="Help">?</TitleButton>
            <TitleButton aria-label="Close"><Icon name="close" size={13} /></TitleButton>
          </TitleBar>
          <DialogTools>
            <DialogTool aria-label="Arc measurements"><Icon name="arcs" /></DialogTool>
            <CaretButton aria-label="Arc options"><Caret /></CaretButton>
            <Units>{"in\nmm"}</Units>
            <DialogTool $on aria-label="Show XYZ"><Icon name="xyz" /></DialogTool>
            <DialogTool aria-label="Point to point"><Icon name="ruler" /></DialogTool>
            <DialogTool aria-label="Projected on"><Icon name="project" /></DialogTool>
            <CaretButton aria-label="Projection options"><Caret /></CaretButton>
            <DialogTool aria-label="Measurement history"><Icon name="tapeClock" /></DialogTool>
            <ToolRule />
            <DialogTool aria-label="Create sensor"><Icon name="chart" /></DialogTool>
            <Spacer />
            <DialogTool aria-label="Pin"><Icon name="pin" size={13} /></DialogTool>
            <DialogTool aria-label="Collapse"><Icon name="up" size={13} /></DialogTool>
          </DialogTools>
          <Selection>
            <SelectionRow>Face&lt;1&gt;</SelectionRow>
            <SelectionRow $on>Face&lt;2&gt;</SelectionRow>
          </Selection>
          <FontButtons>
            <button aria-label="Larger text"><Icon name="fontUp" /></button>
            <button aria-label="Smaller text"><Icon name="fontDown" /></button>
          </FontButtons>
          <Report>
            {"Distance between cylinder axes:  18mm\nDistance: 18.000mm\nDelta X: 0.000mm\nDelta Y: 0.000mm\nDelta Z: 18.000mm\nTotal area: 329.867 millimeters^2"}
          </Report>
          <Report>{"File: Ratchet_&.SLDPRT To: Ratchet_&.SLDPRT\nFile: Ratchet_& Config: Default"}</Report>
        </Dialog>

        <AreaCallout>
          <tbody>
            <tr><th scope="row">Area:</th><td>188.496mm^2</td></tr>
            <tr><th scope="row">Diameter:</th><td>12mm</td></tr>
            <tr><th scope="row">Perimeter:</th><td>75.398mm</td></tr>
          </tbody>
        </AreaCallout>
        <CalloutToggle aria-label="Collapse callout"><Icon name="up" size={14} /></CalloutToggle>
        <DistanceCallout>
          <SelectBox>
            <select aria-label="Distance type" defaultValue="Center Dist">
              <option>Center Dist</option>
            </select>
            <Icon name="down" size={10} />
          </SelectBox>
          <input aria-label="Distance" defaultValue="18mm" />
        </DistanceCallout>
        <Leaders />
      </Workspace>

      <Marks viewBox="0 0 1440 759" aria-hidden="true">
        <g fill="none" stroke={RED} strokeWidth="5">
          <path d="M98 4h55v80H98z" strokeWidth="6" />
          <path d="M750 472h96v91h-96zM640 569h125v89H640z" />
          <path d="M148 108L191 203M866 578L988 638M784 625L988 638" />
        </g>
        <path d="M137 87v28l22-12zM846 568h27l-12 22zM764 623l24-11-1 26z" fill={RED} />
      </Marks>
      <Note $x={139} $y={205}>Click here</Note>
      <Note $x={990} $y={613}>{"Then Select\nFaces"}</Note>
    </Page>
  );
}
